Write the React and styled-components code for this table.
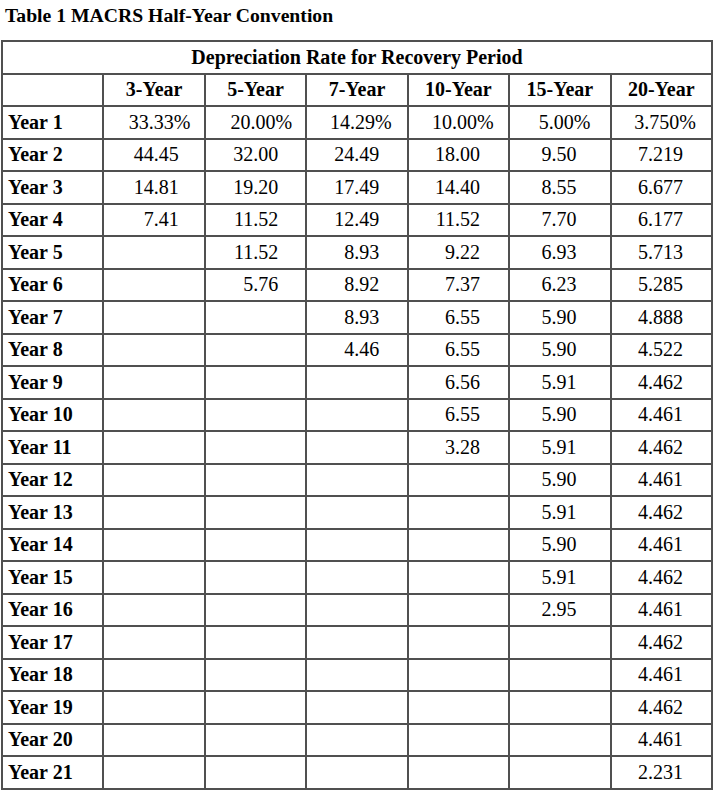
import React from "react";
import styled, { createGlobalStyle } from "styled-components";

const GlobalStyle = createGlobalStyle`
  body {
    margin: 0;
    background: #fff;
    color: #000;
    font-family: "Liberation Serif", "Times New Roman", serif;
  }
`;

const Page = styled.div`
  padding: 4px 6px 0 1px;
`;

const Caption = styled.div`
  font-size: 19.7px;
  font-weight: bold;
  line-height: 23px;
  padding-left: 4px;
  margin-bottom: 13px;
`;

const Table = styled.table`
  width: 712px;
  table-layout: fixed;
  border-collapse: collapse;
  font-size: 20px;
  line-height: 23px;
`;

const Head = styled.th`
  border: 2px solid #505050;
  padding: 3.75px 2px;
  text-align: center;
  font-weight: bold;
`;

const RowLabel = styled.th`
  border: 2px solid #505050;
  padding: 3.75px 2px 3.75px 5px;
  text-align: left;
  font-weight: bold;
  white-space: nowrap;
`;

const Value = styled.td`
  border: 2px solid #505050;
  padding: 3.75px ${(p) => p.$pad}px 3.75px 2px;
  text-align: right;
  white-space: nowrap;
`;

// right gap differs between the first (percent) row and the plain numbers
const columns = [
  {
    label: "3-Year",
    pct: 13.5,
    plain: 25,
    rates: ["33.33%", "44.45", "14.81", "7.41"],
  },
  {
    label: "5-Year",
    pct: 13,
    plain: 27,
    rates: ["20.00%", "32.00", "19.20", "11.52", "11.52", "5.76"],
  },
  {
    label: "7-Year",
    pct: 15,
    plain: 27.5,
    rates: ["14.29%", "24.49", "17.49", "12.49", "8.93", "8.92", "8.93", "4.46"],
  },
  {
    label: "10-Year",
    pct: 14.5,
    plain: 28,
    rates: [
      "10.00%", "18.00", "14.40", "11.52", "9.22", "7.37",
      "6.55", "6.55", "6.56", "6.55", "3.28",
    ],
  },
  {
    label: "15-Year",
    pct: 19,
    plain: 33,
    rates: [
      "5.00%", "9.50", "8.55", "7.70", "6.93", "6.23", "5.90", "5.90",
      "5.91", "5.90", "5.91", "5.90", "5.91", "5.90", "5.91", "2.95",
    ],
  },
  {
    label: "20-Year",
    pct: 15,
    plain: 28,
    rates: [
      "3.750%", "7.219", "6.677", "6.177", "5.713", "5.285", "4.888",
      "4.522", "4.462", "4.461", "4.462", "4.461", "4.462", "4.461",
      "4.462", "4.461", "4.462", "4.461", "4.462", "4.461", "2.231",
    ],
  },
];

const years = Array.from({ length: 21 }, (_, i) => i + 1);

export default function App() {
  return (
    <Page>
      <GlobalStyle />
      <Caption>Table 1 MACRS Half-Year Convention</Caption>
      <Table>
        <thead>
          <tr>
            <Head colSpan={7}>Depreciation Rate for Recovery Period</Head>
          </tr>
          <tr>
            <Head />
            {columns.map((c) => (
              <Head key={c.label}>{c.label}</Head>
            ))}
          </tr>
        </thead>
        <tbody>
          {years.map((y, i) => (
            <tr key={y}>
              <RowLabel>Year {y}</RowLabel>
              {columns.map((c) => (
                <Value key={c.label} $pad={i === 0 ? c.pct : c.plain}>
                  {c.rates[i] || ""}
                </Value>
              ))}
            </tr>
          ))}
        </tbody>
      </Table>
    </Page>
  );
}
